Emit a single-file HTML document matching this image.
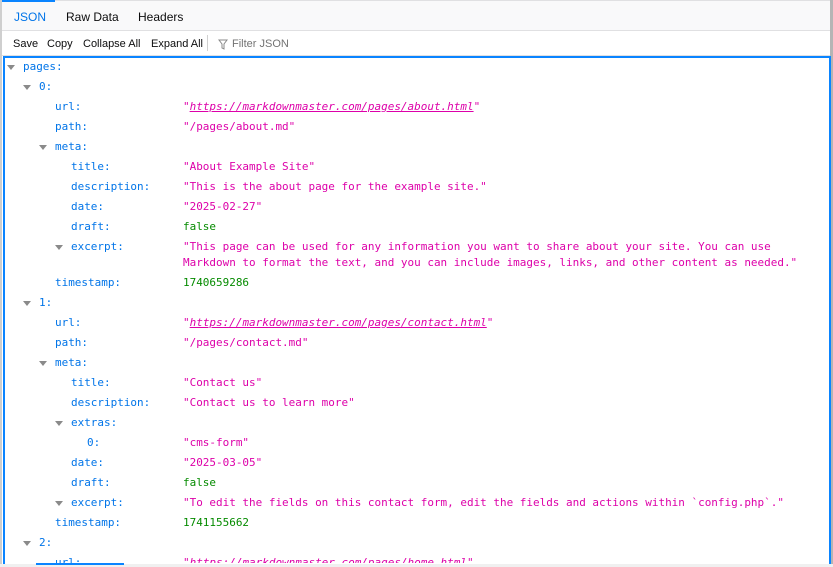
<!DOCTYPE html>
<html><head><meta charset="utf-8"><style>
*{margin:0;padding:0;box-sizing:border-box}
body{width:833px;height:567px;overflow:hidden;background:#fff;font-family:"Liberation Sans",sans-serif;position:relative}
.tabs{position:absolute;left:0;top:0;width:830px;height:31px;background:#f9f9fa;border-top:1px solid #e0e0e2;border-bottom:1px solid #e0e0e2}
.tab{position:absolute;top:9px;font-size:12px;color:#0c0c0d}
.tool{position:absolute;top:38px;font-size:11px;color:#0c0c0d}
.edge{position:absolute;right:0;top:0;width:3px;height:567px;background:#b5b5b5}
.left{position:absolute;left:0;top:0;width:2px;height:567px;background:#cfcfcf}
.box{position:absolute;left:3px;top:56px;width:828px;height:508px;border:2px solid #0a84ff;border-bottom:none;overflow:hidden}
.w{position:absolute;left:0;top:1px;width:833px;height:562px;overflow:hidden}
.r{position:absolute;font-family:"DejaVu Sans Mono",monospace;font-size:10.98px;line-height:16px;white-space:pre}
.k{color:#0074e8}.s{color:#dd00a9}.n{color:#058b00}
.t{position:absolute;width:0;height:0;border-left:4px solid transparent;border-right:4px solid transparent;border-top:5px solid #8a8a8a}
.bot{position:absolute;left:0;top:564px;width:833px;height:3px;background:#f0f0f0}
.thumb{position:absolute;left:36px;top:563px;width:88px;height:2px;background:#0a84ff}
</style></head><body>
<div class="tabs">
<div style="position:absolute;left:2px;top:-1px;width:53px;height:2px;background:#0a84ff"></div>
<div class="tab" style="left:14px;color:#0074e8">JSON</div>
<div class="tab" style="left:66px">Raw Data</div>
<div class="tab" style="left:138px">Headers</div>
</div>
<div class="tool" style="left:13px">Save</div>
<div class="tool" style="left:47px">Copy</div>
<div class="tool" style="left:83px">Collapse All</div>
<div class="tool" style="left:151px">Expand All</div>
<div style="position:absolute;left:207px;top:35px;width:1px;height:16px;background:#d0d0d0"></div>
<svg style="position:absolute;left:218px;top:39px" width="10" height="11" viewBox="0 0 10 11"><path d="M1 1h8L6 5v5L4 9V5z" fill="none" stroke="#888" stroke-width="1"/></svg>
<div class="tool" style="left:232px;color:#737373">Filter JSON</div>
<div style="position:absolute;left:0;top:55px;width:830px;height:1px;background:#e0e0e2"></div>
<div class="left"></div>
<div class="edge"></div>
<div class="box"></div>
<div class="w">
<div class="t" style="left:7px;top:64px"></div><div class="r k" style="left:23px;top:58px">pages:</div>
<div class="t" style="left:23px;top:84px"></div><div class="r k" style="left:39px;top:78px">0:</div>
<div class="r k" style="left:55px;top:98px">url:</div><div class="r s" style="left:183px;top:98px">"<u><i>https://markdownmaster.com/pages/about.html</i></u>"</div>
<div class="r k" style="left:55px;top:118px">path:</div><div class="r s" style="left:183px;top:118px">"/pages/about.md"</div>
<div class="t" style="left:39px;top:144px"></div><div class="r k" style="left:55px;top:138px">meta:</div>
<div class="r k" style="left:71px;top:158px">title:</div><div class="r s" style="left:183px;top:158px">"About Example Site"</div>
<div class="r k" style="left:71px;top:178px">description:</div><div class="r s" style="left:183px;top:178px">"This is the about page for the example site."</div>
<div class="r k" style="left:71px;top:198px">date:</div><div class="r s" style="left:183px;top:198px">"2025-02-27"</div>
<div class="r k" style="left:71px;top:218px">draft:</div><div class="r n" style="left:183px;top:218px">false</div>
<div class="t" style="left:55px;top:244px"></div><div class="r k" style="left:71px;top:238px">excerpt:</div><div class="r s" style="left:183px;top:238px">"This page can be used for any information you want to share about your site. You can use
Markdown to format the text, and you can include images, links, and other content as needed."</div>
<div class="r k" style="left:55px;top:274px">timestamp:</div><div class="r n" style="left:183px;top:274px">1740659286</div>
<div class="t" style="left:23px;top:300px"></div><div class="r k" style="left:39px;top:294px">1:</div>
<div class="r k" style="left:55px;top:314px">url:</div><div class="r s" style="left:183px;top:314px">"<u><i>https://markdownmaster.com/pages/contact.html</i></u>"</div>
<div class="r k" style="left:55px;top:334px">path:</div><div class="r s" style="left:183px;top:334px">"/pages/contact.md"</div>
<div class="t" style="left:39px;top:360px"></div><div class="r k" style="left:55px;top:354px">meta:</div>
<div class="r k" style="left:71px;top:374px">title:</div><div class="r s" style="left:183px;top:374px">"Contact us"</div>
<div class="r k" style="left:71px;top:394px">description:</div><div class="r s" style="left:183px;top:394px">"Contact us to learn more"</div>
<div class="t" style="left:55px;top:420px"></div><div class="r k" style="left:71px;top:414px">extras:</div>
<div class="r k" style="left:87px;top:434px">0:</div><div class="r s" style="left:183px;top:434px">"cms-form"</div>
<div class="r k" style="left:71px;top:454px">date:</div><div class="r s" style="left:183px;top:454px">"2025-03-05"</div>
<div class="r k" style="left:71px;top:474px">draft:</div><div class="r n" style="left:183px;top:474px">false</div>
<div class="t" style="left:55px;top:500px"></div><div class="r k" style="left:71px;top:494px">excerpt:</div><div class="r s" style="left:183px;top:494px">"To edit the fields on this contact form, edit the fields and actions within `config.php`."</div>
<div class="r k" style="left:55px;top:514px">timestamp:</div><div class="r n" style="left:183px;top:514px">1741155662</div>
<div class="t" style="left:23px;top:540px"></div><div class="r k" style="left:39px;top:534px">2:</div>
<div class="r k" style="left:55px;top:554px">url:</div><div class="r s" style="left:183px;top:554px">"<u><i>https://markdownmaster.com/pages/home.html</i></u>"</div>
</div>
<div class="bot"></div>
<div class="thumb"></div>
</body></html>
